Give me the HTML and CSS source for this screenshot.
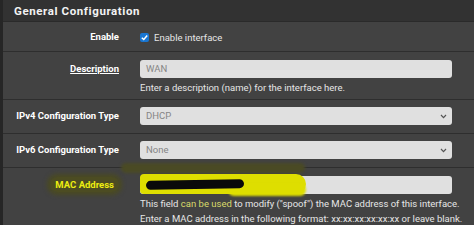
FILE: index.html
```html
<!DOCTYPE html>
<html lang="en">
<head>
    <meta charset="utf-8">
    <link rel="stylesheet" href="styles.css">
</head>
<body>
<div class="panel">
    <div class="panel-heading">General Configuration</div>

    <div class="row row-enable">
        <div class="label">Enable</div>
        <div class="field">
            <label class="check">
                <span class="box">
                    <svg width="9" height="9" viewBox="0 0 10 10"><path d="M2 5.2 L4.2 7.3 L8 2.8" fill="none" stroke="#fff" stroke-width="1.6"/></svg>
                </span>
                Enable interface
            </label>
        </div>
    </div>

    <div class="row row-help">
        <div class="label"><span class="underline">Description</span></div>
        <div class="field">
            <div class="input">WAN</div>
            <div class="help">Enter a description (name) for the interface here.</div>
        </div>
    </div>

    <div class="row">
        <div class="label">IPv4 Configuration Type</div>
        <div class="field">
            <div class="input select">DHCP
                <svg class="chev" width="7" height="5" viewBox="0 0 7 5"><path d="M1 1 L3.5 3.6 L6 1" fill="none" stroke="#555" stroke-width="1.2"/></svg>
            </div>
        </div>
    </div>

    <div class="row">
        <div class="label">IPv6 Configuration Type</div>
        <div class="field">
            <div class="input select">None
                <svg class="chev" width="7" height="5" viewBox="0 0 7 5"><path d="M1 1 L3.5 3.6 L6 1" fill="none" stroke="#555" stroke-width="1.2"/></svg>
            </div>
        </div>
    </div>

    <div class="row row-help row-mac">
        <div class="label"><span class="marked">MAC Address</span></div>
        <div class="field">
            <div class="input"></div>
            <div class="help">This field <span class="hl">can be used</span> to modify ("spoof") the MAC address of this interface.<br>
            Enter a MAC address in the following format: xx:xx:xx:xx:xx:xx or leave blank.</div>
        </div>
        <!-- marker strokes drawn over the screenshot -->
        <div class="stroke-top"></div>
        <div class="stroke-yellow"></div>
        <div class="stroke-yellow-tail"></div>
        <div class="scribble"></div>
    </div>
</div>
</body>
</html>
```

FILE: styles.css
```css
body {
    margin: 0;
    background: #262626;
    font-family: Roboto, "Liberation Sans", sans-serif;
    overflow: hidden;
}

.panel {
    margin-left: 3px;
    background: #424242;
    height: 225px;
    overflow: hidden;
}

.panel-heading {
    height: 21px;
    line-height: 22px;
    padding-left: 11px;
    background: #323232;
    border-bottom: 1px solid #2a2a2a;
    color: #f2f2f2;
    font-size: 11.5px;
    font-weight: bold;
    letter-spacing: 0.6px;
}

.row {
    display: grid;
    grid-template-columns: 116px 312px;
    column-gap: 21px;
    align-items: start;
    padding: 7px 0 8px;
    border-bottom: 1px solid #2e2e2e;
    position: relative;
}

.row-enable {
    padding: 6px 0 5px;
}

.row-help {
    padding: 8px 0 4px;
}

.row-mac {
    border-bottom: none;
}

.label {
    text-align: right;
    line-height: 18px;
    color: #fff;
    font-size: 9.5px;
    font-weight: bold;
    white-space: nowrap;
}

.underline {
    text-decoration: underline;
}

.field {
    font-size: 9.5px;
    color: #e6e6e6;
    white-space: nowrap;
}

.check {
    display: flex;
    align-items: center;
    gap: 5px;
    height: 18px;
    color: #e6e6e6;
}

.box {
    width: 9px;
    height: 9px;
    border-radius: 2px;
    background: #1976d2;
    display: flex;
    align-items: center;
    justify-content: center;
}

.input {
    height: 18px;
    line-height: 18px;
    padding-left: 6px;
    border-radius: 3px;
    background: #e0e0e0;
    color: #858585;
    position: relative;
}

.select .chev {
    position: absolute;
    right: 5px;
    top: 7px;
}

.help {
    margin-top: 2px;
    line-height: 15px;
}

.hl {
    color: #d9d96a;
}

.marked {
    color: #eeee10;
    background: #4c4c22;
    padding: 2px 5px;
    border-radius: 7px;
    box-shadow: 0 0 4px 3px #4a4a22;
}

.stroke-top {
    position: absolute;
    left: 118px;
    top: -5px;
    width: 184px;
    height: 10px;
    border-radius: 6px;
    background: #4a4a24;
    filter: blur(1.5px);
}

.stroke-yellow {
    position: absolute;
    left: 137px;
    top: 6px;
    width: 166px;
    height: 20px;
    border-radius: 4px 10px 10px 4px;
    background: #dede00;
    filter: blur(0.6px);
}

.stroke-yellow-tail {
    position: absolute;
    left: 225px;
    top: 16px;
    width: 78px;
    height: 12px;
    border-radius: 0 8px 8px 8px;
    background: #dede00;
    filter: blur(0.8px);
}

.scribble {
    position: absolute;
    left: 143px;
    top: 12px;
    width: 98px;
    height: 9px;
    border-radius: 5px;
    background: #0a0a0a;
    transform: rotate(-1deg);
}
```
